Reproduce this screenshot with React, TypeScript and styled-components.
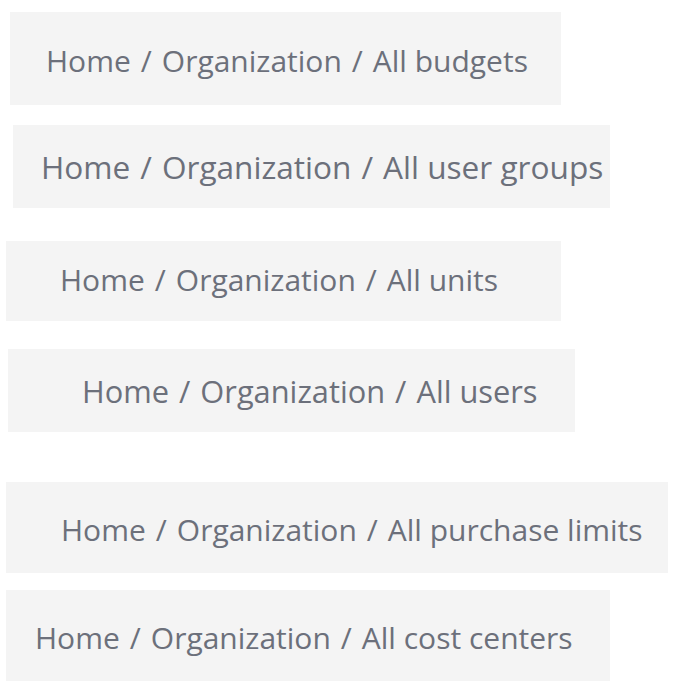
import React from 'react';
import styled, { createGlobalStyle } from 'styled-components';

const Global = createGlobalStyle`
  html, body {
    margin: 0;
    padding: 0;
    background: #ffffff;
  }
  body {
    font-family: "Open Sans", "Noto Sans", sans-serif;
  }
`;

const Page = styled.div`
  width: 674px;
  height: 698px;
  display: flex;
  flex-direction: column;
  align-items: flex-start;
  padding-top: 12px;
  box-sizing: border-box;
  overflow: hidden;
`;

const Bar = styled.nav<{
  $left: number;
  $width: number;
  $height: number;
  $pad: number;
  $gap: number;
  $size: number;
  $shift: number;
}>`
  display: flex;
  align-items: center;
  box-sizing: border-box;
  margin-left: ${(p) => p.$left}px;
  margin-top: ${(p) => p.$gap}px;
  width: ${(p) => p.$width}px;
  height: ${(p) => p.$height}px;
  padding-left: ${(p) => p.$pad}px;
  padding-top: ${(p) => Math.max(0, p.$shift * 2)}px;
  padding-bottom: ${(p) => Math.max(0, -p.$shift * 2)}px;
  background: #f4f4f4;
  color: #6c707b;
  font-size: ${(p) => p.$size}px;
  white-space: nowrap;
`;

const Crumb = styled.span``;

const Sep = styled.span`
  padding: 0 10px;
`;

type Row = {
  trail: string[];
  left: number;
  width: number;
  height: number;
  pad: number;
  gap: number;
  size: number;
  shift: number;
};

const rows: Row[] = [
  { trail: ['Home', 'Organization', 'All budgets'], left: 10, width: 551, height: 93, pad: 36, gap: 0, size: 30, shift: 2 },
  { trail: ['Home', 'Organization', 'All user groups'], left: 13, width: 597, height: 83, pad: 28, gap: 20, size: 31.6, shift: 0 },
  { trail: ['Home', 'Organization', 'All units'], left: 6, width: 555, height: 80, pad: 54, gap: 33, size: 30, shift: -2 },
  { trail: ['Home', 'Organization', 'All users'], left: 8, width: 567, height: 83, pad: 74, gap: 28, size: 30.8, shift: 0 },
  { trail: ['Home', 'Organization', 'All purchase limits'], left: 6, width: 662, height: 91, pad: 55, gap: 50, size: 30, shift: 2 },
  { trail: ['Home', 'Organization', 'All cost centers'], left: 6, width: 604, height: 91, pad: 29, gap: 17, size: 30, shift: 2 },
];

export default function App() {
  return (
    <>
      <Global />
      <Page>
        {rows.map((r, i) => (
          <Bar
            key={i}
            $left={r.left}
            $width={r.width}
            $height={r.height}
            $pad={r.pad}
            $gap={r.gap}
            $size={r.size}
            $shift={r.shift}
          >
            {r.trail.map((t, j) => (
              <React.Fragment key={t}>
                {j > 0 && <Sep>/</Sep>}
                <Crumb>{t}</Crumb>
              </React.Fragment>
            ))}
          </Bar>
        ))}
      </Page>
    </>
  );
}
